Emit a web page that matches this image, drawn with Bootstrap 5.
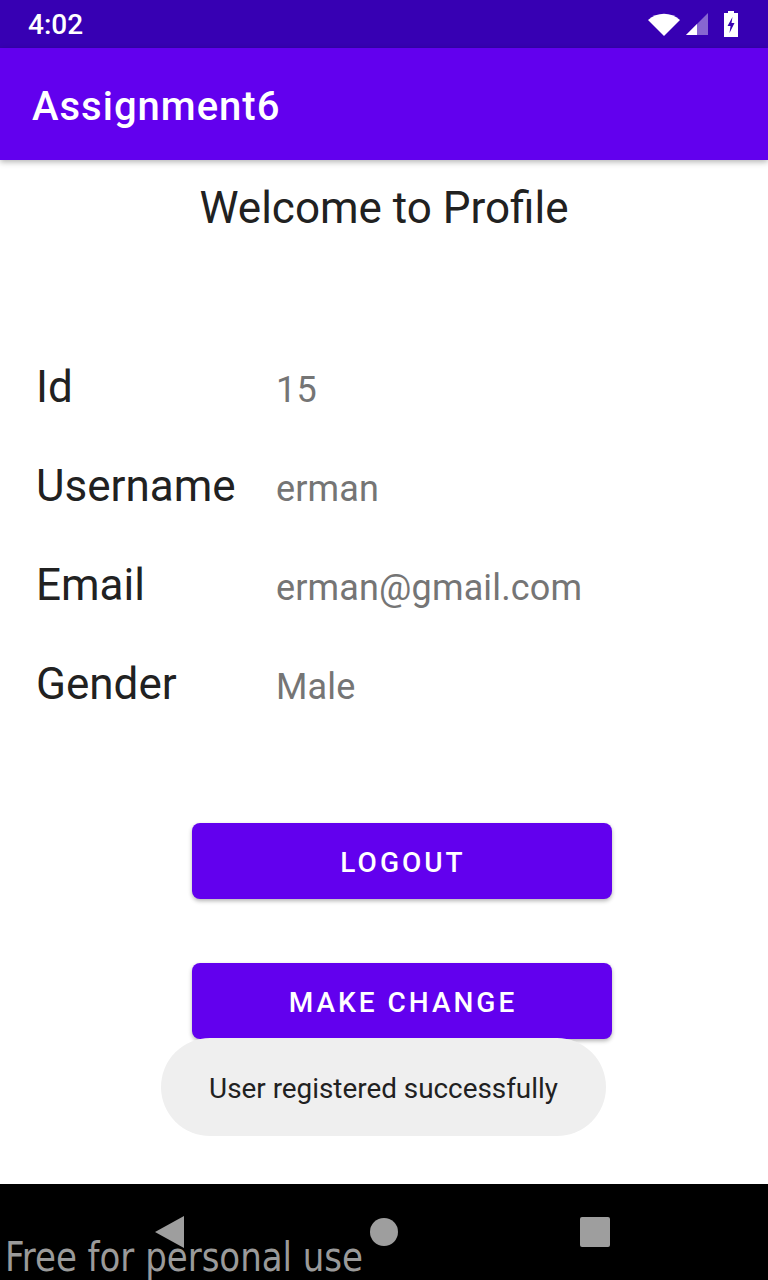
<!DOCTYPE html>
<html lang="en">
<head>
    <meta charset="UTF-8">
    <meta name="viewport" content="width=device-width, initial-scale=1.0">
    <title>Assignment6</title>
    <link href="https://cdn.jsdelivr.net/npm/bootstrap@5.3.0/dist/css/bootstrap.min.css" rel="stylesheet">
    <style>
        html, body { width: 768px; height: 1280px; overflow: hidden; }
        body { font-family: Roboto, "Liberation Sans", sans-serif; background: #fff; color: #212121; }
        .phone { height: 1280px; position: relative; }
        .status-bar { height: 48px; background: #3700b3; padding: 2px 30px 0 28px; }
        .status-time { font-size: 28px; font-weight: 500; line-height: 1; }
        .status-icons { margin-top: -2px; gap: 6px; }
        .status-batt { margin-left: 10px; }
        .app-bar { height: 112px; background: #6200ee; padding: 5px 0 0 32px; box-shadow: 0 2px 6px rgba(0,0,0,.3); position: relative; }
        .app-title { font-size: 40px; font-weight: 500; line-height: 1; margin: 0; color: #fff; letter-spacing: 1px; }
        .screen { flex: 1 1 auto; }
        .welcome { font-size: 44px; line-height: 52px; margin: 22px 0 0 0; text-align: center; font-weight: 400; }
        .info-list { margin-top: 127px; padding-left: 36px; }
        .info-row { height: 99px; display: flex; }
        .info-label { width: 240px; font-size: 44px; line-height: 52px; }
        .info-value { font-size: 36px; line-height: 42px; color: #757575; padding-top: 8px; letter-spacing: .15px; }
        .btn-stack { margin-top: 66px; padding-left: 192px; gap: 64px; }
        .btn-app { width: 420px; height: 76px; background: #6200ee; color: #fff; border: 0; border-radius: 8px; font-size: 28px; font-weight: 500; letter-spacing: 3px; box-shadow: 0 2px 4px rgba(0,0,0,.3); text-transform: uppercase; padding: 3px 0 0 2px; }
        .toast-pill { position: absolute; left: 161px; top: 1038px; width: 445px; height: 98px; padding-top: 4px; border-radius: 49px; background: #efefef; font-size: 27.85px; color: #212121; }
        .nav-strip { height: 96px; background: #000; }
        .nav-slot { position: absolute; }
        .nav-back { left: 155px; top: 1216px; }
        .nav-home { left: 370px; top: 1218px; }
        .nav-recent { left: 580px; top: 1217px; }
        .watermark { position: absolute; left: 5px; top: 1233px; font-family: "DejaVu Sans Condensed", "DejaVu Sans", sans-serif; font-stretch: condensed; font-size: 40px; line-height: 48px; color: #9a9a9a; white-space: nowrap; transform: scaleX(.945); transform-origin: left center; }
    </style>
</head>
<body>
    <div class="phone d-flex flex-column">
        <div class="status-bar d-flex align-items-center justify-content-between text-white">
            <span class="status-time">4:02</span>
            <span class="status-icons d-flex align-items-center">
                <svg width="32" height="23" viewBox="0 0 32 23"><path d="M0 7 C9 -1.500 23 -1.500 32 7 L16 23 Z" fill="#fff"/></svg>
                <svg width="22" height="22" viewBox="0 0 22 22"><path d="M22 0 V22 H0 Z" fill="#fff" opacity=".4"/><path d="M11 11 V22 H0 Z" fill="#fff"/></svg>
                <svg class="status-batt" width="14" height="26" viewBox="0 0 14 26"><path d="M4 0 H10 V2 H14 V26 H0 V2 H4 Z" fill="#fff"/><path d="M8.500 6 L3.500 15 H6.500 L5.500 22 L10.500 12 H7.500 Z" fill="#3700b3"/></svg>
            </span>
        </div>
        <div class="app-bar d-flex align-items-center">
            <h1 class="app-title">Assignment6</h1>
        </div>
        <div class="screen d-flex flex-column">
            <h2 class="welcome">Welcome to Profile</h2>
            <div class="info-list">
                <div class="info-row"><div class="info-label">Id</div><div class="info-value">15</div></div>
                <div class="info-row"><div class="info-label">Username</div><div class="info-value">erman</div></div>
                <div class="info-row"><div class="info-label">Email</div><div class="info-value">erman@gmail.com</div></div>
                <div class="info-row"><div class="info-label">Gender</div><div class="info-value">Male</div></div>
            </div>
            <div class="btn-stack d-flex flex-column">
                <button class="btn-app" type="button">Logout</button>
                <button class="btn-app" type="button">Make Change</button>
            </div>
        </div>
        <div class="nav-strip"></div>
        <svg class="nav-slot nav-back" width="29" height="32" viewBox="0 0 29 32"><path d="M29 0 V32 L0 16 Z" fill="#9e9e9e"/></svg>
        <svg class="nav-slot nav-home" width="28" height="28" viewBox="0 0 28 28"><circle cx="14" cy="14" r="14" fill="#9e9e9e"/></svg>
        <svg class="nav-slot nav-recent" width="30" height="30" viewBox="0 0 30 30"><rect width="30" height="30" rx="2" fill="#9e9e9e"/></svg>
        <div class="watermark">Free for personal use</div>
        <div class="toast-pill d-flex align-items-center justify-content-center">User registered successfully</div>
    </div>
    <script src="https://cdn.jsdelivr.net/npm/bootstrap@5.3.0/dist/js/bootstrap.bundle.min.js"></script>
</body>
</html>
